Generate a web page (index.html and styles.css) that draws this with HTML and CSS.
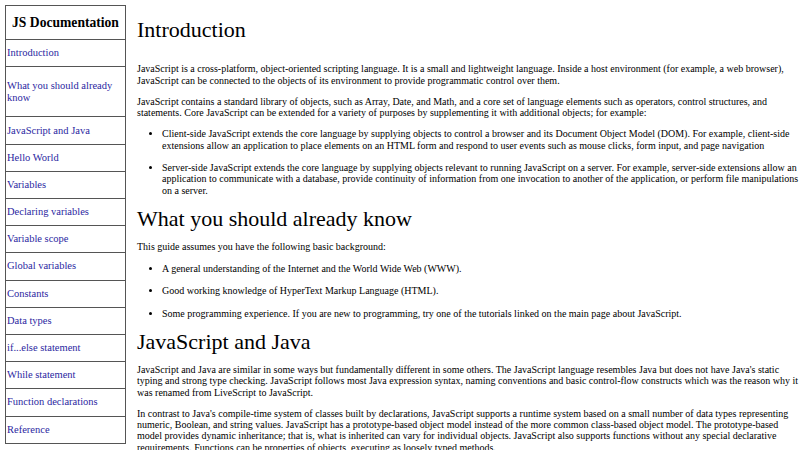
FILE: index.html
```html
<!DOCTYPE html>
<html lang="en">
<head>
    <meta charset="UTF-8">
    <meta name="viewport" content="width=device-width, initial-scale=1.0">
    <title>JS Documentation</title>
    <link rel="stylesheet" href="styles.css">
</head>
<body>
    <nav id="navbar">
        <header class="nav-title">JS Documentation</header>
        <ul class="nav-list">
            <li><a class="nav-link" href="#Introduction">Introduction</a></li>
            <li><a class="nav-link tall" href="#What_you_should_already_know">What you should already know</a></li>
            <li><a class="nav-link" href="#JavaScript_and_Java">JavaScript and Java</a></li>
            <li><a class="nav-link" href="#Hello_World">Hello World</a></li>
            <li><a class="nav-link" href="#Variables">Variables</a></li>
            <li><a class="nav-link" href="#Declaring_variables">Declaring variables</a></li>
            <li><a class="nav-link" href="#Variable_scope">Variable scope</a></li>
            <li><a class="nav-link" href="#Global_variables">Global variables</a></li>
            <li><a class="nav-link" href="#Constants">Constants</a></li>
            <li><a class="nav-link" href="#Data_types">Data types</a></li>
            <li><a class="nav-link" href="#if...else_statement">if...else statement</a></li>
            <li><a class="nav-link" href="#While_statement">While statement</a></li>
            <li><a class="nav-link" href="#Function_declarations">Function declarations</a></li>
            <li><a class="nav-link" href="#Reference">Reference</a></li>
        </ul>
    </nav>

    <main id="main-doc">
        <section class="main-section" id="Introduction">
            <header class="section-title">Introduction</header>
            <article>
                <p>JavaScript is a cross-platform, object-oriented scripting language. It is a small and lightweight language. Inside a host environment (for example, a web browser), JavaScript can be connected to the objects of its environment to provide programmatic control over them.</p>
                <p>JavaScript contains a standard library of objects, such as Array, Date, and Math, and a core set of language elements such as operators, control structures, and statements. Core JavaScript can be extended for a variety of purposes by supplementing it with additional objects; for example:</p>
                <ul>
                    <li>Client-side JavaScript extends the core language by supplying objects to control a browser and its Document Object Model (DOM). For example, client-side extensions allow an application to place elements on an HTML form and respond to user events such as mouse clicks, form input, and page navigation</li>
                    <li>Server-side JavaScript extends the core language by supplying objects relevant to running JavaScript on a server. For example, server-side extensions allow an application to communicate with a database, provide continuity of information from one invocation to another of the application, or perform file manipulations on a server.</li>
                </ul>
            </article>
        </section>

        <section class="main-section" id="What_you_should_already_know">
            <header class="section-title">What you should already know</header>
            <article>
                <p>This guide assumes you have the following basic background:</p>
                <ul>
                    <li>A general understanding of the Internet and the World Wide Web (WWW).</li>
                    <li>Good working knowledge of HyperText Markup Language (HTML).</li>
                    <li>Some programming experience. If you are new to programming, try one of the tutorials linked on the main page about JavaScript.</li>
                </ul>
            </article>
        </section>

        <section class="main-section" id="JavaScript_and_Java">
            <header class="section-title">JavaScript and Java</header>
            <article>
                <p>JavaScript and Java are similar in some ways but fundamentally different in some others. The JavaScript language resembles Java but does not have Java's static typing and strong type checking. JavaScript follows most Java expression syntax, naming conventions and basic control-flow constructs which was the reason why it was renamed from LiveScript to JavaScript.</p>
                <p>In contrast to Java's compile-time system of classes built by declarations, JavaScript supports a runtime system based on a small number of data types representing numeric, Boolean, and string values. JavaScript has a prototype-based object model instead of the more common class-based object model. The prototype-based model provides dynamic inheritance; that is, what is inherited can vary for individual objects. JavaScript also supports functions without any special declarative requirements. Functions can be properties of objects, executing as loosely typed methods.</p>
            </article>
        </section>
    </main>
</body>
</html>
```

FILE: styles.css
```css
html {
    overflow: hidden;
}
body {
    margin: 5px 0 5px 5px;
    display: flex;
    align-items: flex-start;
    font-family: "Liberation Serif", "Times New Roman", serif;
    font-size: 10px;
    line-height: 11.25px;
    color: #000;
    background: #fff;
}
#navbar {
    flex: 0 0 119px;
    border: 1px solid #555;
}
.nav-title {
    padding: 8.7px 0;
    font-size: 13.6px;
    line-height: 15.6px;
    font-weight: bold;
    text-align: center;
    border-bottom: 1px solid #555;
}
.nav-list {
    list-style: none;
    margin: 0;
    padding: 0;
}
.nav-list li + li {
    border-top: 1px solid #555;
}
.nav-link {
    display: block;
    padding: 7.1px 1px;
    font-size: 10.5px;
    line-height: 12px;
    color: #2b1f9f;
    text-decoration: none;
}
.nav-link.tall {
    padding: 12.65px 1px;
}
#main-doc {
    flex: 1;
    margin-left: 11px;
}
.section-title {
    margin: 10px 0;
    font-size: 22px;
    line-height: 25.3px;
}
#Introduction .section-title {
    margin: 11.6px 0 21.6px;
}
article p {
    margin: 10px 0;
}
article ul {
    margin: 10px 0;
    padding-left: 25px;
}
article li + li {
    margin-top: 11.25px;
}
```
